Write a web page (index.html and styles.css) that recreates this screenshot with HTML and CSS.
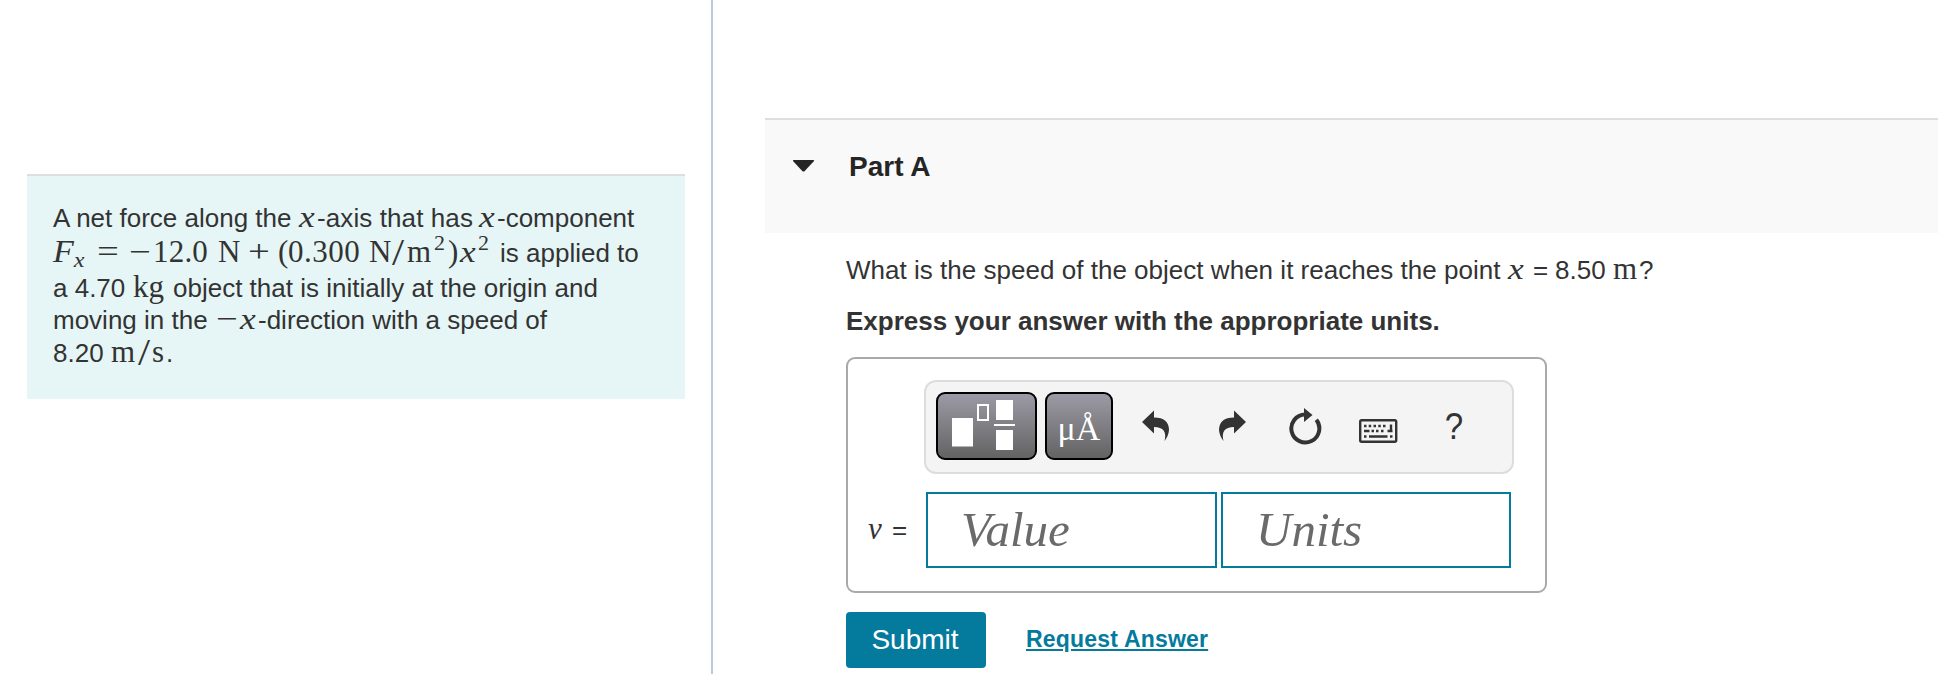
FILE: index.html
```html
<!DOCTYPE html>
<html lang="en">
<head>
    <meta charset="UTF-8">
    <meta name="viewport" content="width=device-width, initial-scale=1.0">
    <title>Part A</title>
    <link rel="stylesheet" href="styles.css">
</head>
<body>
    <div class="page">
        <aside class="sidebar">
            <div class="problem">
                <div class="line"><span class="fit l1a">A net force along the</span><i class="math var w-x">x</i><span class="fit l1b">-axis that has</span><i class="math var w-x">x</i><span>-component</span></div>
                <div class="line equation"><i class="tok t-f">F<sub>x</sub></i><span class="tok t-eq">=</span><span class="tok t-minus">−</span><span class="tok t-12">12.0</span><span class="tok t-n">N</span><span class="tok t-plus">+</span><span class="tok t-paren">(</span><span class="tok t-03">0.300</span><span class="tok t-n2">N</span><span class="tok t-slash">/</span><span class="tok t-m">m</span><sup class="tok t-sq">2</sup><span class="tok t-close">)</span><i class="tok var t-x">x</i><sup class="tok t-sq2">2</sup><span class="plain">is applied to</span></div>
                <div class="line tall"><span class="fit l3a">a 4.70</span><span class="math fit l3b">kg</span><span>object that is initially at the origin and</span></div>
                <div class="line last"><span class="fit l4a">moving in the</span><span class="math fit l4b">−</span><i class="math var w-x">x</i><span>-direction with a speed of</span></div>
                <div class="line"><span class="fit l5a">8.20</span><span class="math fit l5b">m</span><span class="math fit l5c">/</span><span class="math fit l5d">s</span><span>.</span></div>
            </div>
        </aside>

        <main class="content">
            <div class="part-header">
                <svg class="caret" width="22" height="12" viewBox="0 0 22 12"><path d="M1 0H20Q22 0 20.6 1.5L11.5 11.2Q10.5 12 9.500 11.2L.4 1.5Q-1 0 1 0Z" fill="#252525"/></svg>
                <h2>Part A</h2>
            </div>

            <div class="part-body">
                <p class="question"><span class="fit q1">What is the speed of the object when it reaches the point</span><i class="math var q2">x</i><span class="fit q3">=</span><span class="fit q4">8.50</span><span class="math fit q5">m</span><span>?</span></p>
                <p class="instructions">Express your answer with the appropriate units.</p>

                <div class="answer">
                    <div class="toolbar">
                        <button class="tool template">
                            <svg width="97" height="64" viewBox="0 0 97 64"><g fill="#fff"><path d="M14 24h21v28.500H14z"/><path d="M58 6h17v20H58zM58 36h17v20H58zM56 30h21v2H56z"/></g><path d="M40 11h10v15H40z" fill="none" stroke="#fff" stroke-width="2"/></svg>
                        </button>
                        <button class="tool symbols">μÅ</button>
                        <svg class="icon undo" width="28" height="32" viewBox="0 0 28 32"><path d="M0 12L12 .5V7.500C22 7.500 27 12 27 20Q26.500 26 22.500 31Q26 17 12 17V23.500Z" fill="#333"/></svg>
                        <svg class="icon redo" width="28" height="32" viewBox="0 0 28 32"><path d="M27 12L15 .5V7.500C5 7.500 0 12 0 20Q.5 26 4.500 31Q1 17 15 17V23.500Z" fill="#333"/></svg>
                        <svg class="icon reset" width="34" height="38" viewBox="0 0 34 38"><path d="M17 6.500A14 14 0 1 0 28.300 11.800" fill="none" stroke="#333" stroke-width="4"/><path d="M16 0L24.500 7L16 14Z" fill="#333"/></svg>
                        <svg class="icon keyboard" width="39" height="24" viewBox="0 0 39 24"><rect x="1.200" y="1.200" width="36" height="21.600" rx="1.500" fill="none" stroke="#333" stroke-width="2.400"/><path d="M5 7h2.500M9.700 7h2.500M14.500 7H17M19.300 7h2.500M24 7h2.500M5 12h5.500M12.500 12H15M17 12h2.500M22 12h2.500M28.500 12H33.500M5 17.500h2.500M10 17.500h18.500M31 17.500h2.500M32 5.500V13" fill="none" stroke="#333" stroke-width="2.400"/></svg>
                        <span class="help">?</span>
                    </div>
                    <div class="fields">
                        <label><i class="math">v</i><span>=</span></label>
                        <input class="value" type="text" placeholder="Value">
                        <input class="units" type="text" placeholder="Units">
                    </div>
                </div>

                <div class="actions">
                    <button class="submit">Submit</button>
                    <a href="#">Request Answer</a>
                </div>
            </div>
        </main>
    </div>
</body>
</html>
```
FILE: styles.css
```css
* {
    box-sizing: border-box;
}
body {
    margin: 0;
    background-color: #fff;
    color: #333;
    font-family: "Liberation Sans", Arial, sans-serif;
    font-size: 26px;
    overflow: hidden;
}
.page {
    display: flex;
    height: 674px;
}
.sidebar {
    width: 713px;
    flex: none;
    border-right: 2px solid #bccbdb;
    padding: 174px 26px 0 27px;
}
.problem {
    height: 225px;
    border-top: 2px solid #dedede;
    background-color: #e6f6f6;
    padding: 25px 0 0 26px;
}
.line {
    display: flex;
    align-items: baseline;
    height: 32px;
    line-height: 32px;
    white-space: nowrap;
}
.math, .tok {
    font-family: "Liberation Serif", "Times New Roman", serif;
    font-size: 31px;
}
.fit, .tok, .var {
    flex: none;
    display: block;
}
/* wide italic variable */
.var {
    font-size: 29px;
    transform: scaleX(1.22);
    transform-origin: 0 50%;
}
.w-x {
    width: 18px;
}
.l1a { width: 246px; }
.l1b {
    width: 162px;
    letter-spacing: 0.1px;
}
.equation {
    height: 37px;
    line-height: 37px;
}
.line.tall {
    height: 33px;
    line-height: 33px;
}
.line.last {
    height: 33px;
}
.tok sub {
    font-size: 22px;
    line-height: 0;
    vertical-align: -5px;
}
sup.tok {
    font-size: 22px;
    position: relative;
    top: -12px;
}
.t-eq, .t-minus, .t-plus, .t-f, .t-slash, .l4b, .l5c {
    transform: scaleX(1.25);
    transform-origin: 0 50%;
}
.t-f {
    width: 44px;
    transform: scaleX(1.1);
}
.t-eq { width: 32px; }
.t-minus { width: 24px; }
.t-12 {
    width: 65px;
    letter-spacing: 0.2px;
}
.t-n { width: 30px; }
.t-plus { width: 30px; }
.t-paren { width: 10px; }
.t-03 {
    width: 81px;
    letter-spacing: 0.5px;
}
.t-n2 { width: 23px; }
.t-slash { width: 15px; }
.t-slash, .l5c {
    transform: scale(1.4, 1.25);
}
.t-m { width: 27px; }
.t-sq { width: 14px; }
.t-close { width: 12px; }
.t-x { width: 18px; }
.t-sq2 { width: 22px; }
.l3a { width: 80px; }
.l3b { width: 40px; }
.l4a { width: 163px; }
.l4b { width: 24px; }
.l5a { width: 58px; }
.l5b { width: 27px; }
.l5c { width: 14px; }
.l5d { width: 14px; }

.content {
    flex: 1;
    padding: 118px 0 0 52px;
}
.part-header {
    display: flex;
    height: 115px;
    border-top: 2px solid #dedede;
    background-color: #f9f9f9;
}
.caret {
    margin: 40px 34px 0 28px;
}
.part-header h2 {
    margin: 31px 0 0;
    color: #252525;
    font-size: 28px;
    line-height: 32px;
}
.part-body {
    padding: 20px 0 0 81px;
}
.question {
    display: flex;
    align-items: baseline;
    margin: 0;
    height: 32px;
    line-height: 32px;
    white-space: nowrap;
}
.q1 {
    width: 662px;
    letter-spacing: 0.02px;
}
.q2 { width: 25px; }
.q3 { width: 22px; }
.q4 { width: 58px; }
.q5 { width: 26px; }
.instructions {
    margin: 20px 0 20px;
    font-weight: bold;
    line-height: 32px;
}
.answer {
    width: 701px;
    height: 236px;
    border: 2px solid #a9a9a9;
    border-radius: 9px;
    padding-top: 21px;
}
.toolbar {
    display: flex;
    align-items: flex-start;
    width: 590px;
    height: 94px;
    margin-left: 76px;
    padding: 10px;
    border: 2px solid #ddd;
    border-radius: 12px;
    background-color: #f4f4f4;
}
.tool {
    height: 68px;
    padding: 0;
    border: 2px solid #000;
    border-radius: 9px;
    background: linear-gradient(#9c9aa5, #636363);
    color: #fff;
}
.template {
    width: 101px;
    margin-right: 8px;
}
.template svg {
    display: block;
}
.symbols {
    width: 68px;
    padding-top: 5px;
    font-family: "Liberation Serif", serif;
    font-size: 34px;
}
.icon {
    flex: none;
}
.undo { margin: 18px 0 0 29px; }
.redo { margin: 18px 0 0 49px; }
.reset { margin: 16px 0 0 41px; }
.keyboard { margin: 27px 0 0 37px; }
.help {
    margin: 14px 0 0 46px;
    font-size: 36px;
    line-height: 42px;
    transform: scaleX(0.92);
}
.fields {
    display: flex;
    margin-top: 18px;
}
label {
    display: flex;
    align-items: baseline;
    width: 78px;
    padding: 21px 0 0 20px;
    line-height: 32px;
}
label .math {
    width: 24px;
}
input {
    height: 76px;
    padding: 0 0 2px 33px;
    border: 2px solid #047a9c;
    font-family: "Liberation Serif", "Times New Roman", serif;
    font-size: 49px;
    font-style: italic;
}
input::placeholder {
    color: #6a6a6a;
}
.value {
    width: 291px;
    margin-right: 4px;
}
.units {
    width: 290px;
}
.actions {
    display: flex;
    margin-top: 19px;
}
.submit {
    width: 140px;
    height: 56px;
    margin-right: 40px;
    padding: 0 2px 0 0;
    border: none;
    border-radius: 4px;
    background-color: #047a9c;
    color: #fff;
    font-family: inherit;
    font-size: 28px;
}
.actions a {
    color: #047a9c;
    font-size: 23px;
    font-weight: bold;
    line-height: 54px;
    letter-spacing: 0.2px;
}
```
